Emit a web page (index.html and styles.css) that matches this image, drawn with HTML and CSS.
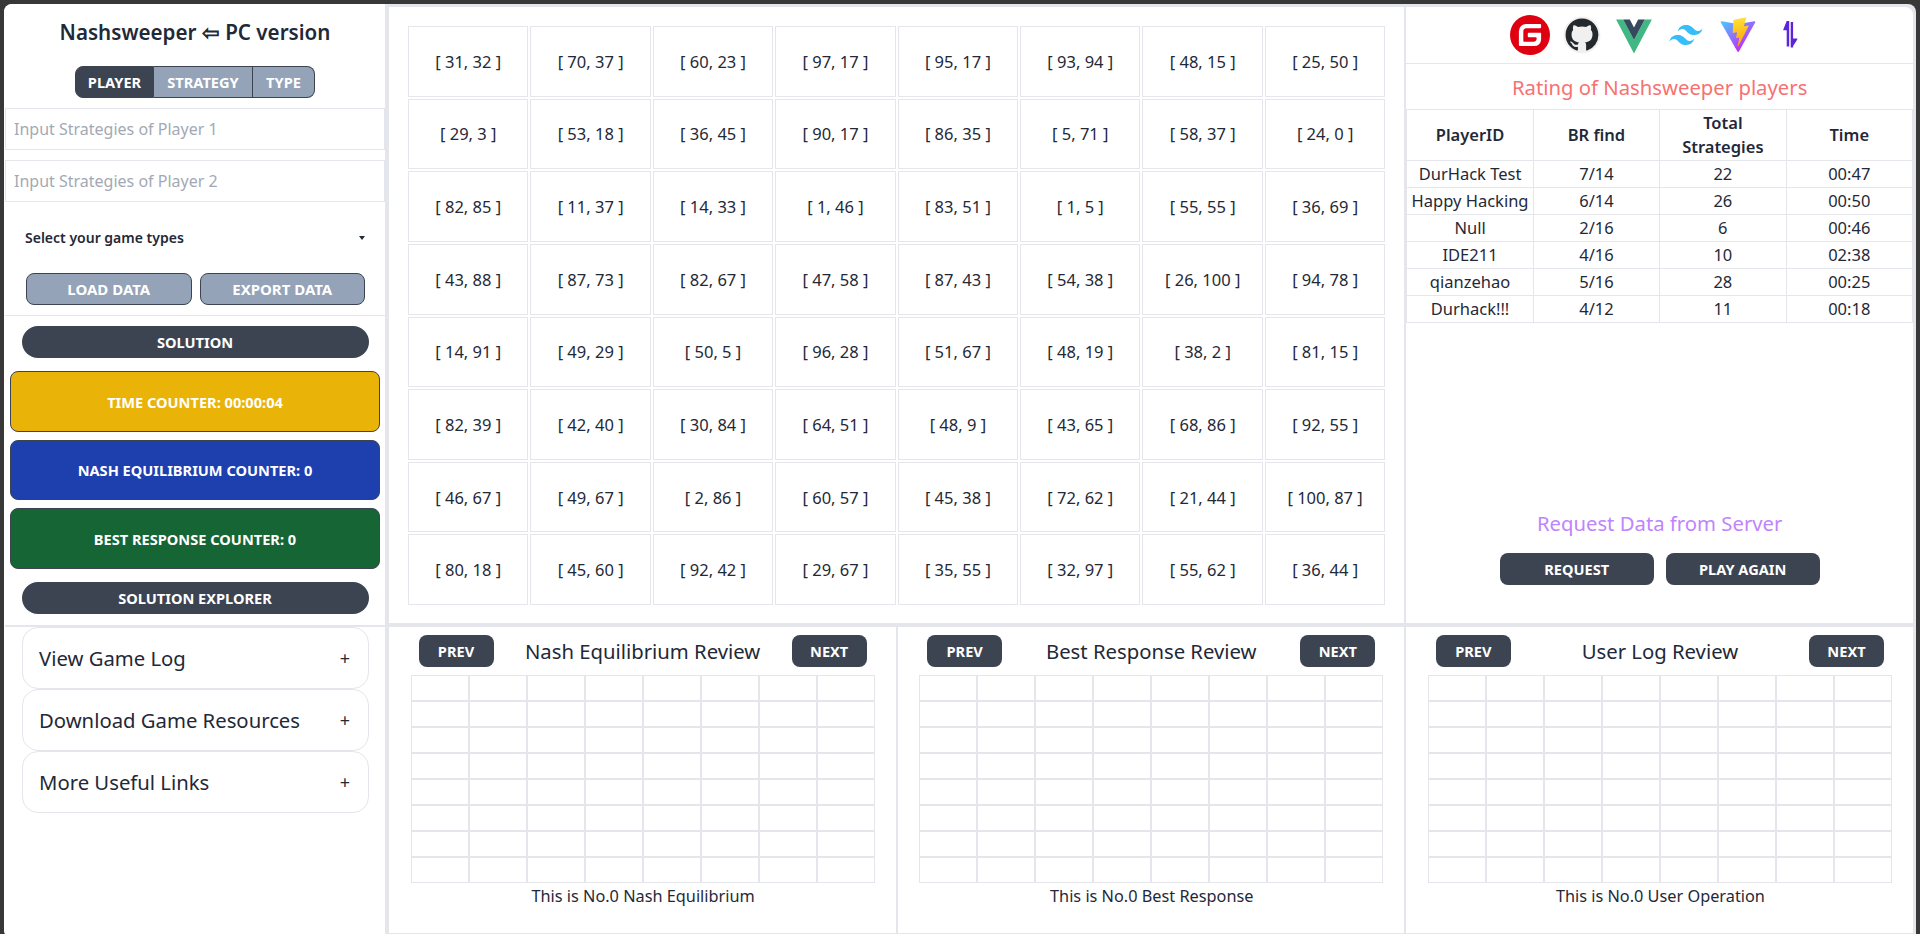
FILE: index.html
```html
<!DOCTYPE html>
<html lang="en">
<head>
    <meta charset="UTF-8">
    <meta name="viewport" content="width=device-width, initial-scale=1.0">
    <title>Nashsweeper</title>
    <link rel="stylesheet" href="styles.css">
</head>
<body>
    <div class="app">
        <aside class="sidebar">
            <div class="sidebar-head">
                <h1>Nashsweeper ⇦ PC version</h1>
                <div class="toggle">
                    <button class="toggle-btn active player">PLAYER</button>
                    <button class="toggle-btn strategy">STRATEGY</button>
                    <button class="toggle-btn type">TYPE</button>
                </div>
            </div>
            <input class="strategy-input" type="text" placeholder="Input Strategies of Player 1">
            <input class="strategy-input second" type="text" placeholder="Input Strategies of Player 2">
            <div class="game-type">
                <span>Select your game types</span>
                <i class="caret"></i>
            </div>
            <div class="data-btns">
                <button class="btn-data">LOAD DATA</button>
                <button class="btn-data">EXPORT DATA</button>
            </div>
            <div class="solution">
                <button class="btn-pill">SOLUTION</button>
                <div class="counter time">TIME COUNTER: 00:00:04</div>
                <div class="counter nash">NASH EQUILIBRIUM COUNTER: 0</div>
                <div class="counter best">BEST RESPONSE COUNTER: 0</div>
                <button class="btn-pill">SOLUTION EXPLORER</button>
            </div>
            <div class="collapses">
                <div class="collapse-item"><span>View Game Log</span><b>+</b></div>
                <div class="collapse-item"><span>Download Game Resources</span><b>+</b></div>
                <div class="collapse-item"><span>More Useful Links</span><b>+</b></div>
            </div>
        </aside>

        <main class="content">
            <section class="panel board-panel">
                <div class="board">
                    <div class="cell">[ 31, 32 ]</div><div class="cell">[ 70, 37 ]</div><div class="cell">[ 60, 23 ]</div><div class="cell">[ 97, 17 ]</div><div class="cell">[ 95, 17 ]</div><div class="cell">[ 93, 94 ]</div><div class="cell">[ 48, 15 ]</div><div class="cell">[ 25, 50 ]</div>
                    <div class="cell">[ 29, 3 ]</div><div class="cell">[ 53, 18 ]</div><div class="cell">[ 36, 45 ]</div><div class="cell">[ 90, 17 ]</div><div class="cell">[ 86, 35 ]</div><div class="cell">[ 5, 71 ]</div><div class="cell">[ 58, 37 ]</div><div class="cell">[ 24, 0 ]</div>
                    <div class="cell">[ 82, 85 ]</div><div class="cell">[ 11, 37 ]</div><div class="cell">[ 14, 33 ]</div><div class="cell">[ 1, 46 ]</div><div class="cell">[ 83, 51 ]</div><div class="cell">[ 1, 5 ]</div><div class="cell">[ 55, 55 ]</div><div class="cell">[ 36, 69 ]</div>
                    <div class="cell">[ 43, 88 ]</div><div class="cell">[ 87, 73 ]</div><div class="cell">[ 82, 67 ]</div><div class="cell">[ 47, 58 ]</div><div class="cell">[ 87, 43 ]</div><div class="cell">[ 54, 38 ]</div><div class="cell">[ 26, 100 ]</div><div class="cell">[ 94, 78 ]</div>
                    <div class="cell">[ 14, 91 ]</div><div class="cell">[ 49, 29 ]</div><div class="cell">[ 50, 5 ]</div><div class="cell">[ 96, 28 ]</div><div class="cell">[ 51, 67 ]</div><div class="cell">[ 48, 19 ]</div><div class="cell">[ 38, 2 ]</div><div class="cell">[ 81, 15 ]</div>
                    <div class="cell">[ 82, 39 ]</div><div class="cell">[ 42, 40 ]</div><div class="cell">[ 30, 84 ]</div><div class="cell">[ 64, 51 ]</div><div class="cell">[ 48, 9 ]</div><div class="cell">[ 43, 65 ]</div><div class="cell">[ 68, 86 ]</div><div class="cell">[ 92, 55 ]</div>
                    <div class="cell">[ 46, 67 ]</div><div class="cell">[ 49, 67 ]</div><div class="cell">[ 2, 86 ]</div><div class="cell">[ 60, 57 ]</div><div class="cell">[ 45, 38 ]</div><div class="cell">[ 72, 62 ]</div><div class="cell">[ 21, 44 ]</div><div class="cell">[ 100, 87 ]</div>
                    <div class="cell">[ 80, 18 ]</div><div class="cell">[ 45, 60 ]</div><div class="cell">[ 92, 42 ]</div><div class="cell">[ 29, 67 ]</div><div class="cell">[ 35, 55 ]</div><div class="cell">[ 32, 97 ]</div><div class="cell">[ 55, 62 ]</div><div class="cell">[ 36, 44 ]</div>
                </div>
            </section>

            <section class="panel rating-panel">
                <div class="logos">
                    <svg class="logo" viewBox="0 0 24 24"><path fill="#df0011" d="M11.984 0A12 12 0 0 0 0 12a12 12 0 0 0 12 12 12 12 0 0 0 12-12A12 12 0 0 0 12 0a12 12 0 0 0-.016 0zm6.09 5.333c.328 0 .593.266.592.593v1.482a.594.594 0 0 1-.593.592H9.777c-.982 0-1.778.796-1.778 1.778v5.63c0 .327.266.592.593.592h5.63c.982 0 1.778-.796 1.778-1.778v-.296a.593.593 0 0 0-.592-.593h-4.15a.592.592 0 0 1-.592-.592v-1.482a.593.593 0 0 1 .593-.592h6.815c.327 0 .593.265.593.592v3.408a4 4 0 0 1-4 4H5.926a.593.593 0 0 1-.593-.593V9.778a4.444 4.444 0 0 1 4.445-4.444h8.296Z"/></svg>
                    <svg class="logo" viewBox="-1.75 -1.75 19.5 19.5"><circle cx="8" cy="8" r="9" fill="#f0f0f0"/><path fill="#24292e" d="M8 0C3.58 0 0 3.58 0 8c0 3.54 2.29 6.53 5.47 7.59.4.07.55-.17.55-.38 0-.19-.01-.82-.01-1.49-2.01.37-2.53-.49-2.69-.94-.09-.23-.48-.94-.82-1.13-.28-.15-.68-.52-.01-.53.63-.01 1.08.58 1.23.82.72 1.21 1.87.87 2.33.66.07-.52.28-.87.51-1.07-1.78-.2-3.64-.89-3.64-3.95 0-.87.31-1.59.82-2.15-.08-.2-.36-1.02.08-2.12 0 0 .67-.21 2.2.82.64-.18 1.32-.27 2-.27.68 0 1.36.09 2 .27 1.53-1.04 2.2-.82 2.2-.82.44 1.1.16 1.92.08 2.12.51.56.82 1.27.82 2.15 0 3.07-1.87 3.75-3.65 3.95.29.25.54.73.54 1.48 0 1.07-.01 1.93-.01 2.2 0 .21.15.46.55.38A8.013 8.013 0 0016 8c0-4.42-3.58-8-8-8z"/></svg>
                    <svg class="logo" viewBox="-15 -30 286 260" preserveAspectRatio="none"><path fill="#41b883" d="M0 0l128 220.8L256 0h-51.2L128 132.48 50.56 0H0Z"/><path fill="#35495e" d="M50.56 0 128 133.12 204.8 0h-47.36L128 51.2 97.92 0H50.56Z"/></svg>
                    <svg class="logo" viewBox="-2.4 -2.4 28.8 28.8"><path fill="#38bdf8" d="M12.001,4.8c-3.2,0-5.2,1.6-6,4.8c1.2-1.6,2.6-2.2,4.2-1.8c0.913,0.228,1.565,0.89,2.288,1.624 C13.666,10.618,15.027,12,18.001,12c3.2,0,5.2-1.6,6-4.8c-1.2,1.6-2.6,2.2-4.2,1.8c-0.913-0.228-1.565-0.89-2.288-1.624 C16.337,6.182,14.976,4.8,12.001,4.8z M6.001,12c-3.2,0-5.2,1.6-6,4.8c1.2-1.6,2.6-2.2,4.2-1.8c0.913,0.228,1.565,0.89,2.288,1.624 c1.177,1.194,2.538,2.576,5.512,2.576c3.2,0,5.2-1.6,6-4.8c-1.2,1.6-2.6,2.2-4.2,1.8c-0.913-0.228-1.565-0.89-2.288-1.624 C10.337,13.382,8.976,12,6.001,12z"/></svg>
                    <svg class="logo" viewBox="-22 -5 454 414">
                        <defs>
                            <linearGradient id="viteBody" x1="6" y1="33" x2="235" y2="344" gradientUnits="userSpaceOnUse"><stop offset="0" stop-color="#41d1ff"/><stop offset="1" stop-color="#bd34fe"/></linearGradient>
                            <linearGradient id="viteBolt" x1="194" y1="8" x2="236" y2="293" gradientUnits="userSpaceOnUse"><stop offset="0" stop-color="#ffea83"/><stop offset=".08" stop-color="#ffdd35"/><stop offset="1" stop-color="#ffa800"/></linearGradient>
                        </defs>
                        <path fill="url(#viteBody)" d="M399.641 59.5246L215.643 388.545C211.844 395.338 202.084 395.378 198.228 388.618L10.5817 59.5563C6.38087 52.1896 12.6802 43.2665 21.0281 44.7586L205.223 77.6824C206.398 77.8924 207.601 77.8904 208.776 77.6763L389.119 44.8058C397.439 43.2894 403.768 52.1434 399.641 59.5246Z"/>
                        <path fill="url(#viteBolt)" d="M292.965 1.5744L156.801 28.2552C154.563 28.6937 152.906 30.5903 152.771 32.8664L144.395 174.33C144.198 177.662 147.258 180.248 150.51 179.498L188.42 170.749C191.967 169.931 195.172 173.055 194.443 176.622L183.18 231.775C182.422 235.487 185.907 238.661 189.532 237.56L212.947 230.446C216.577 229.344 220.065 232.527 219.297 236.242L201.398 322.875C200.278 328.294 207.486 331.249 210.492 326.603L212.5 323.5L323.454 102.072C325.312 98.3645 322.108 94.137 318.036 94.9228L279.014 102.454C275.347 103.161 272.227 99.746 273.262 96.1583L298.731 7.86689C299.767 4.27314 296.636 0.855181 292.965 1.5744Z"/>
                    </svg>
                    <svg class="logo" viewBox="0 0 40 40"><path fill="#5a26dc" d="M16.7 6H19.2V31.5H16.7V15.2H13.3V14.4Z"/><path fill="#5a26dc" d="M20.7 7H23.1V23.6H27.3V24.5L23.1 31V32.5H20.7Z"/></svg>
                </div>
                <h2 class="rating-title">Rating of Nashsweeper players</h2>
                <table class="rating">
                    <thead>
                        <tr><th>PlayerID</th><th>BR find</th><th>Total<br>Strategies</th><th>Time</th></tr>
                    </thead>
                    <tbody>
                        <tr><td>DurHack Test</td><td>7/14</td><td>22</td><td>00:47</td></tr>
                        <tr><td>Happy Hacking</td><td>6/14</td><td>26</td><td>00:50</td></tr>
                        <tr><td>Null</td><td>2/16</td><td>6</td><td>00:46</td></tr>
                        <tr><td>IDE211</td><td>4/16</td><td>10</td><td>02:38</td></tr>
                        <tr><td>qianzehao</td><td>5/16</td><td>28</td><td>00:25</td></tr>
                        <tr><td>Durhack!!!</td><td>4/12</td><td>11</td><td>00:18</td></tr>
                    </tbody>
                </table>
                <h2 class="request-title">Request Data from Server</h2>
                <div class="request-btns">
                    <button class="btn-dark wide">REQUEST</button>
                    <button class="btn-dark wide">PLAY AGAIN</button>
                </div>
            </section>

            <section class="panel review">
                <div class="review-head">
                    <button class="btn-dark">PREV</button>
                    <h3>Nash Equilibrium Review</h3>
                    <button class="btn-dark">NEXT</button>
                </div>
                <div class="review-grid"></div>
                <p class="review-note">This is No.0 Nash Equilibrium</p>
            </section>
            <section class="panel review">
                <div class="review-head">
                    <button class="btn-dark">PREV</button>
                    <h3>Best Response Review</h3>
                    <button class="btn-dark">NEXT</button>
                </div>
                <div class="review-grid"></div>
                <p class="review-note">This is No.0 Best Response</p>
            </section>
            <section class="panel review">
                <div class="review-head">
                    <button class="btn-dark">PREV</button>
                    <h3>User Log Review</h3>
                    <button class="btn-dark">NEXT</button>
                </div>
                <div class="review-grid"></div>
                <p class="review-note">This is No.0 User Operation</p>
            </section>
        </main>
    </div>
    <script src="script.js"></script>
</body>
</html>
```

FILE: styles.css
```css
* {
    box-sizing: border-box;
}
html, body {
    height: 100%;
}
body {
    margin: 0;
    padding: 4px 4px 0;
    overflow: hidden;
    background-color: #383838;
    color: #1f2937;
    font-family: "Noto Sans", "Liberation Sans", sans-serif;
    font-size: 16px;
}
button {
    font-family: inherit;
    border: none;
    cursor: pointer;
}
.app {
    display: grid;
    grid-template-columns: 381px 1fr;
    column-gap: 4px;
    height: 934px;
    background-color: #e5e6eb;
    border-radius: 8px 8px 0 8px;
    overflow: hidden;
}

/* left column */
.sidebar {
    background-color: white;
    padding-left: 1px;
    display: flex;
    flex-direction: column;
    height: 930px;
}
.sidebar-head {
    height: 104px;
    padding-top: 14px;
    text-align: center;
}
.sidebar-head h1 {
    margin: 0;
    font-size: 20.6px;
    line-height: 28px;
    font-weight: 600;
}
.toggle {
    display: flex;
    width: 240px;
    height: 32px;
    margin: 20px 0 0 70px;
}
.toggle-btn {
    color: white;
    font-size: 14.6px;
    font-weight: 700;
    background-color: #94a3b8;
    border: 1px solid #3d4451;
    padding: 0;
}
.toggle-btn.active {
    background-color: #3d4451;
}
.toggle-btn.player {
    width: 79px;
    border-radius: 8px 0 0 8px;
}
.toggle-btn.strategy {
    width: 99px;
    border-left: none;
}
.toggle-btn.type {
    width: 62px;
    border-left: none;
    border-radius: 0 8px 8px 0;
}
.strategy-input {
    display: block;
    width: 100%;
    height: 42px;
    padding: 0 8px;
    border: 1px solid #e5e6eb;
    font-family: inherit;
    font-size: 16px;
    outline: none;
}
.strategy-input.second {
    margin-top: 10px;
}
.strategy-input::placeholder {
    color: #a3a9b4;
}
.game-type {
    display: flex;
    align-items: center;
    justify-content: space-between;
    height: 71px;
    padding: 0 20px;
    font-size: 14px;
    font-weight: 600;
}
.caret {
    width: 0;
    height: 0;
    border-left: 3.5px solid transparent;
    border-right: 3.5px solid transparent;
    border-top: 4px solid #1f2937;
}
.data-btns {
    display: flex;
    gap: 8px;
    padding: 0 20px 0 21px;
    height: 42px;
}
.btn-data {
    flex: 1;
    height: 32px;
    background-color: #94a3b8;
    color: white;
    border: 1px solid #3d4451;
    border-radius: 8px;
    font-size: 15px;
    font-weight: 700;
}
.solution {
    border-top: 1px solid #e5e6eb;
    border-bottom: 2px solid #e5e6eb;
    height: 312px;
    padding: 10px 4px 0;
    display: flex;
    flex-direction: column;
    align-items: center;
}
.btn-pill {
    width: 347px;
    height: 32px;
    flex: none;
    background-color: #3d4451;
    color: white;
    border-radius: 16px;
    font-size: 14.6px;
    font-weight: 700;
}
.counter {
    width: 370px;
    height: 61px;
    margin-top: 8px;
    display: flex;
    align-items: center;
    justify-content: center;
    color: white;
    font-size: 14.6px;
    font-weight: 700;
    border: 1px solid #3d4451;
    border-radius: 8px;
}
.counter.time {
    margin-top: 13px;
    background-color: #eab308;
}
.counter.nash {
    height: 60px;
    background-color: #1e40af;
}
.counter.best {
    background-color: #166534;
    margin-bottom: 13px;
}
.collapses {
    padding: 0 17px;
}
.collapse-item {
    display: flex;
    align-items: center;
    justify-content: space-between;
    width: 347px;
    height: 62px;
    padding: 0 18px 0 16px;
    border: 1px solid #e5e6eb;
    border-radius: 16px;
    font-size: 20.3px;
}
.collapse-item b {
    font-weight: 400;
    font-size: 18px;
}

/* right part */
.content {
    display: grid;
    grid-template-columns: repeat(6, 1fr);
    grid-template-rows: 616px 1fr;
    gap: 4px 2px;
    padding: 3px 3px 0 0;
    height: 930px;
}
.panel {
    background-color: white;
}
.board-panel {
    grid-column: span 4;
    padding: 19px 19px 0;
}
.board {
    display: grid;
    grid-template-columns: repeat(8, 1fr);
    grid-template-rows: repeat(8, 1fr);
    gap: 2px;
    height: 579px;
}
.cell {
    display: flex;
    align-items: center;
    justify-content: center;
    border: 1px solid #e5e6eb;
    font-size: 16.5px;
}
.rating-panel {
    grid-column: span 2;
    border-top-right-radius: 8px;
    display: flex;
    flex-direction: column;
    align-items: center;
}
.logos {
    display: flex;
    justify-content: center;
    align-items: center;
    gap: 12px;
    width: 100%;
    height: 57px;
    flex: none;
    border-bottom: 1px solid #e5e6eb;
}
.logo {
    width: 40px;
    height: 40px;
    flex: none;
}
.rating-title,
.request-title {
    margin: 0;
    font-size: 20.3px;
    line-height: 28px;
    font-weight: 400;
}
.rating-title {
    margin-top: 9px;
    color: #f87171;
}
.rating {
    width: 100%;
    table-layout: fixed;
    border-collapse: collapse;
    margin-top: 8px;
    text-align: center;
    font-size: 16.5px;
    line-height: 24px;
}
.rating th,
.rating td {
    border: 1px solid #e5e6eb;
    padding: 1px 0;
    height: 27px;
}
.rating th {
    font-weight: 600;
    padding: 1px 16px;
    height: 51px;
}
.request-title {
    margin-top: 186px;
    color: #c084fc;
}
.request-btns {
    display: flex;
    gap: 12px;
    margin-top: 16px;
}
.btn-dark {
    background-color: #3d4451;
    color: white;
    height: 32px;
    border-radius: 8px;
    font-size: 14.6px;
    font-weight: 700;
    padding: 0;
    width: 75px;
}
.btn-dark.wide {
    width: 154px;
}
.review {
    grid-column: span 2;
    padding: 8px 20px 0 21.5px;
    text-align: center;
    border-bottom: 1px solid #e5e6eb;
}
.review-head {
    display: flex;
    align-items: center;
    justify-content: space-between;
    padding: 0 9px 0 8px;
    height: 32px;
}
.review-head h3 {
    margin: 0;
    font-size: 20.3px;
    font-weight: 400;
    line-height: 28px;
}
.review-grid {
    display: grid;
    grid-template-columns: repeat(8, 58px);
    grid-template-rows: repeat(8, 26px);
    margin-top: 8px;
}
.review-grid span {
    border: 1px solid #e5e6eb;
}
.review-note {
    margin: 1px 0 0;
    font-size: 16.3px;
    line-height: 24px;
}
```

FILE: script.js
```js
// empty 8x8 cells for the three review boards
document.querySelectorAll('.review-grid').forEach(function(grid) {
    for (let i = 0; i < 64; i++) {
        grid.appendChild(document.createElement('span'));
    }
});
```
